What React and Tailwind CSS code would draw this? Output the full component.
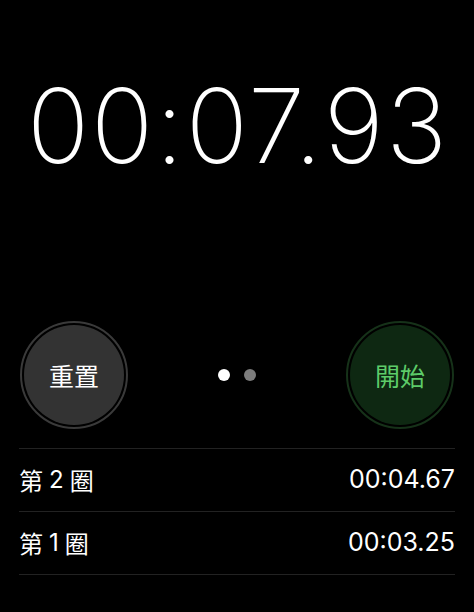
import React from "react";

const laps = [
  { label: "第", num: "2", time: "00:04.67" },
  { label: "第", num: "1", time: "00:03.25" },
];

function RoundButton({ label, ring, fill, text }) {
  return (
    <div className={`w-[108px] h-[108px] rounded-full border-2 ${ring} p-[2px]`}>
      <div className={`w-full h-full rounded-full ${fill} flex items-center justify-center`}>
        <span className={`text-[25px] ${text} font-['Noto_Sans_CJK_TC',sans-serif] leading-none`}>{label}</span>
      </div>
    </div>
  );
}

export default function App() {
  return (
    <div className="w-[474px] h-[612px] bg-black overflow-hidden flex flex-col font-['Inter','Noto_Sans_CJK_TC',sans-serif]">
      <div className="h-[250px] flex items-center justify-center">
        <span className="text-[103px] font-extralight text-white leading-none tracking-[2px] pl-[2px]">
          00:07.93
        </span>
      </div>
      <div className="mt-[71px] px-[20px] flex items-center justify-between">
        <RoundButton label="重置" ring="border-[#3a3a3a]" fill="bg-[#333333]" text="text-white" />
        <div className="flex items-center gap-[14px]">
          <span className="w-[12px] h-[12px] rounded-full bg-white"></span>
          <span className="w-[12px] h-[12px] rounded-full bg-[#7d7d7d]"></span>
        </div>
        <RoundButton label="開始" ring="border-[#163219]" fill="bg-[#0e2812]" text="text-[#5dcc69]" />
      </div>
      <div className="mt-[19px] mx-[19px] border-t border-[#222222]">
        {laps.map((lap) => (
          <div key={lap.num} className="h-[63px] border-b border-[#222222] flex items-center justify-between">
            <span className="text-[24px] text-white font-['Noto_Sans_CJK_TC',sans-serif] flex items-center">
              <span>{lap.label}</span>
              <span className="mx-[6px] font-['Inter',sans-serif]">{lap.num}</span>
              <span>圈</span>
            </span>
            <span className="text-[25px] text-white">{lap.time}</span>
          </div>
        ))}
      </div>
    </div>
  );
}
